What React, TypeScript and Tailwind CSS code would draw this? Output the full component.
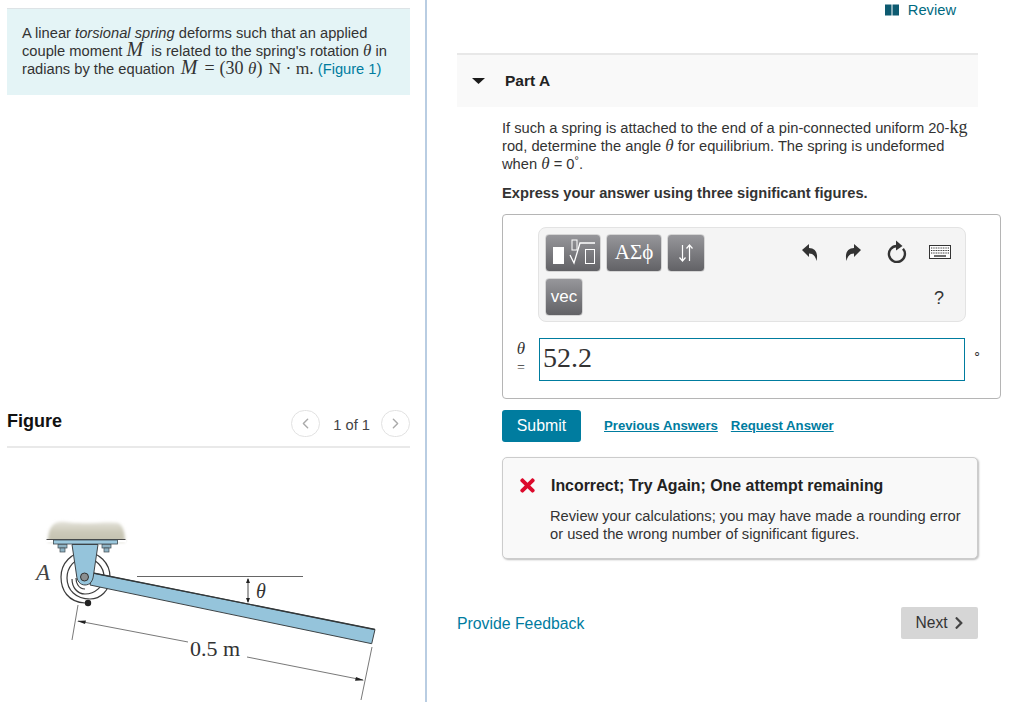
import { FaChevronRight, FaTimes } from "react-icons/fa";
import { ChevronLeft, ChevronRight } from "lucide-react";

const serif = "font-['Liberation_Serif',serif]";

function Theta() {
  return <span className={`${serif} italic text-[17px] leading-[0]`}>θ</span>;
}

function RodFigure() {
  return (
    <svg viewBox="0 0 400 200" className="block w-[400px] h-[200px] ml-[-7px]">
      <defs>
        <linearGradient id="ceil" x1="0" y1="0" x2="0" y2="1">
          <stop offset="0" stopColor="#e4e3da" />
          <stop offset="0.5" stopColor="#cbc9b9" />
          <stop offset="1" stopColor="#c2c0ae" />
        </linearGradient>
        <filter id="soft" x="-10%" y="-30%" width="120%" height="160%">
          <feGaussianBlur stdDeviation="1.800" />
        </filter>
      </defs>
      {/* ceiling */}
      <path d="M48 40 C48 24 54 18 66 20 C84 23 108 19 118 21 C124 24 125 32 125 40 Z" fill="url(#ceil)" filter="url(#soft)" />
      <rect x="46" y="37.500" width="80" height="3" fill="#fff" />
      <path d="M46.500 37.500 H125.500" stroke="#4a4a4a" strokeWidth="1.200" />
      {/* spring */}
      <g fill="none" stroke="#3b3b3b" strokeWidth="1.200">
        <path d="M85 101 C68 100 61 88 61 75 C61 61 72 50 85 50 C99 50 110 61 110 75 C110 89 100 97 90 97 C76 97 67 88 67 76 C67 65 75 56 85 56 C96 56 104 65 104 75 C104 84 95 92 85 92 C77 92 72 85 72 77" />
        <path d="M85 87 C78 87 76 80 76 76" />
      </g>
      <circle cx="88" cy="101" r="3.200" fill="#222" />
      {/* plate and bolts */}
      <rect x="53.500" y="38" width="64" height="4" fill="#9cc9de" stroke="#3f4a50" strokeWidth="0.800" />
      <g fill="#8fb3c4" stroke="#3f4a50" strokeWidth="0.700">
        <rect x="58" y="42.500" width="9" height="3.500" />
        <rect x="102" y="42.500" width="9" height="3.500" />
        <rect x="60" y="46" width="5" height="4" />
        <rect x="104" y="46" width="5" height="4" />
      </g>
      {/* rod */}
      <path d="M93 71 L375 127.500 L371.700 141.700 L90 83 Z" fill="#95c4db" stroke="#3d4346" strokeWidth="1" />
      <path d="M93 71 L375 127.500" stroke="#33383a" strokeWidth="1.400" fill="none" />
      {/* bracket */}
      <path d="M72 42.500 H98 L93.500 73 C93 79 90 83 85 83 C80 83 77 79 76.500 73 Z" fill="#95c4db" stroke="#3d4346" strokeWidth="1" />
      <circle cx="84.500" cy="75" r="4" fill="#8b8f90" stroke="#333" strokeWidth="1" />
      {/* angle */}
      <path d="M137 74.500 H303" stroke="#555" strokeWidth="0.900" />
      <path d="M248 77 V100" stroke="#333" strokeWidth="0.900" />
      <path d="M248 76 L246 81 H250 Z M248 101 L246 96 H250 Z" fill="#222" />
      <text x="256" y="96" fontSize="20" fontStyle="italic" fill="#333" fontFamily="'Liberation Serif', serif">θ</text>
      <text x="36" y="78" fontSize="23" fontStyle="italic" fill="#444" fontFamily="'Liberation Serif', serif">A</text>
      {/* dimension */}
      <g stroke="#555" strokeWidth="0.800" fill="none">
        <path d="M78 103 L72 138" />
        <path d="M372 145 L361 198" />
        <path d="M78 119 L188 140" />
        <path d="M247 155 L363 178" />
      </g>
      <path d="M77 119 L86 118.600 L85 122 Z M364 178.200 L355 178.800 L356 175 Z" fill="#222" />
      <text x="190" y="153.500" fontSize="22" fill="#333" fontFamily="'Liberation Serif', serif">0.5 m</text>
    </svg>
  );
}

function Keyboard() {
  return (
    <svg viewBox="0 0 22 14" className="w-[22px] h-[14px] shrink-0">
      <rect x="0.500" y="0.500" width="21" height="13" fill="#fff" stroke="#333" />
      <path d="M2 3 H20 M2 5.500 H20 M2 8 H20" stroke="#333" strokeWidth="1.200" strokeDasharray="1 0.700" />
      <path d="M5 11 H17" stroke="#333" strokeWidth="1.400" />
    </svg>
  );
}

function UndoIcon({ flip }: { flip?: boolean }) {
  return (
    <svg viewBox="0 0 16 17" className={`w-[16px] h-[17px] shrink-0 ${flip ? "-scale-x-100" : ""}`} fill="#333">
      <path d="M0 6 L7 0 V4 C13 4 16.500 8.500 14.500 17 C13.500 12 11 9.500 7 9.500 V13 Z" />
    </svg>
  );
}

function ResetIcon() {
  return (
    <svg viewBox="0 0 20 23" className="w-[20px] h-[23px] shrink-0" fill="none">
      <path d="M10 6 A8 8 0 1 0 16 8.800" stroke="#333" strokeWidth="2.400" />
      <path d="M9 0.500 L15.500 6 L9 10.500 Z" fill="#333" />
    </svg>
  );
}

function ToolButton({ w, children }: { w: string; children: React.ReactNode }) {
  return (
    <div className={`${w} h-[38px] rounded-[4px] bg-linear-to-b from-[#97979b] to-[#626266] border border-[#d5d5d5] text-white flex items-center justify-center`}>
      {children}
    </div>
  );
}

export default function App() {
  return (
    <div className="flex h-[702px] w-[1024px] overflow-hidden bg-white text-[#333] font-['Liberation_Sans',Arial,sans-serif] text-[14.700px] leading-[18px]">
      <div className="w-[427px] shrink-0 border-r-2 border-[#b9cde2] pt-2 pl-[7px] pr-[15px]">
        <div className="h-[87px] bg-[#e4f4f6] border-t border-[#dde3e6] pl-[15px] pt-[15px] pr-2">
          A linear <i>torsional spring</i> deforms such that an applied couple moment{" "}
          <span className={`${serif} italic text-[20px] leading-[0] mr-[4px]`}>M</span> is related to the spring's rotation <Theta /> in
          radians by the equation <span className={`${serif} italic text-[20px] leading-[0] ml-[2px]`}>M</span>
          <span className={`${serif} text-[18px] leading-[0] ml-[7px]`}>=</span>
          <span className={`${serif} text-[18px] leading-[0] ml-[5px]`}>(30 <i className="text-[17px]">θ</i>)</span>
          <span className={`${serif} text-[17.500px] leading-[0] ml-[6px]`}>N · m.</span>{" "}
          <span className="text-[#007c9f]">(Figure 1)</span>
        </div>
        <div className="mt-[311px] h-[42px] flex items-start border-b-2 border-[#e9e9e9]">
          <span className="font-bold text-[#111] text-[18px] leading-[30px]">Figure</span>
          <div className="ml-auto flex items-center text-[#444] h-[28px] pt-[6px]">
            <span className="w-[29px] h-[27px] rounded-full border border-[#e2e2e2] flex items-center justify-center text-[#aaa]"><ChevronLeft size={17} strokeWidth={2} /></span>
            <span className="ml-[13px] mr-[11px] mt-[4px]">1 of 1</span>
            <span className="w-[29px] h-[27px] rounded-full border border-[#e2e2e2] flex items-center justify-center text-[#aaa]"><ChevronRight size={17} strokeWidth={2} /></span>
          </div>
        </div>
        <div className="mt-[54px]">
          <RodFigure />
        </div>
      </div>

      <div className="flex-1 pl-[30px]">
        <div className="w-[521px] h-[53px] flex justify-end items-start pt-[1px] pr-[22px] text-[#00697f]">
          <span className="flex items-center gap-[9px] leading-[18px]">
            <svg viewBox="0 0 14 12" className="w-[14px] h-[12px]" fill="#0d5a70">
              <rect x="0" y="0.500" width="6.500" height="11" />
              <rect x="7.500" y="0.500" width="6.500" height="11" />
            </svg>
            Review
          </span>
        </div>
        <div className="w-[521px] h-[54px] bg-[#f9f9f9] border-t-2 border-[#e8e8e8] flex items-center pb-[1px]">
          <svg viewBox="0 0 13 6" className="w-[13px] h-[6px] ml-[15px]"><path d="M0 0 H13 L6.500 6 Z" fill="#1c1c1c" /></svg>
          <span className="ml-[20px] font-bold text-[#222] text-[15.500px]">Part A</span>
        </div>

        <div className="pl-[45px]">
          <p className="w-[476px] mt-[12px]">
            If such a spring is attached to the end of a pin-connected uniform 20-<span className={`${serif} text-[18px] leading-[0]`}>kg</span> rod, determine the angle <Theta /> for equilibrium. The spring is undeformed when <Theta /> = 0<sup className="text-[11px] leading-[0]">°</sup>.
          </p>
          <p className="mt-[11px] font-bold">Express your answer using three significant figures.</p>

          <div className="mt-[12px] w-[499px] h-[185px] border border-[#b5b5b5] rounded-[4px] pt-3">
            <div className="ml-[35px] w-[428px] h-[95px] bg-[#f4f4f4] border border-[#e3e3e3] rounded-[8px] pl-[6px] pt-[6px] pr-[14px] flex justify-between">
              <div className="flex flex-col gap-[6px]">
                <div className="flex gap-[5px]">
                  <ToolButton w="w-[56px]">
                    <svg viewBox="0 0 50 32" className="w-[50px] h-[32px]" fill="none" stroke="#fff">
                      <rect x="5" y="10" width="11" height="17" fill="#fff" stroke="none" />
                      <rect x="24" y="3" width="5" height="10" strokeWidth="1" />
                      <path d="M22 18 L26 26 L32 6 H47" strokeWidth="1.300" />
                      <rect x="37.500" y="12.500" width="9" height="14" strokeWidth="1" />
                    </svg>
                  </ToolButton>
                  <ToolButton w="w-[56px]"><span className={`${serif} text-[21px] pb-[3px]`}>ΑΣϕ</span></ToolButton>
                  <ToolButton w="w-[38px]">
                    <svg viewBox="0 0 18 20" className="w-[18px] h-[20px]" fill="none" stroke="#fff" strokeWidth="1.200">
                      <path d="M5.500 2 V18 M2.500 14.500 L5.500 18 L8.500 14.500" />
                      <path d="M12.500 18 V2 M9.500 5.500 L12.500 2 L15.500 5.500" />
                    </svg>
                  </ToolButton>
                </div>
                <ToolButton w="w-[38px]"><span className="text-[17px] pb-[1px]">vec</span></ToolButton>
              </div>
              <div className="flex flex-col w-[149px] pt-[6px]">
                <div className="flex items-center text-[#333] h-[24px]">
                  <UndoIcon />
                  <span className="ml-[27px]"><UndoIcon flip /></span>
                  <span className="ml-[26px] -mt-[2px]"><ResetIcon /></span>
                  <span className="ml-[22px]"><Keyboard /></span>
                </div>
                <div className="mt-[25px] text-right pr-[7px] text-[18px] text-[#333]">?</div>
              </div>
            </div>
            <div className="mt-[16px] flex items-start">
              <div className={`w-[36px] shrink-0 text-center ${serif} pt-[2px]`}>
                <i className="block text-[17px] leading-[18px]">θ</i>
                <span className="block text-[14px] leading-[20px]">=</span>
              </div>
              <div className="w-[426px] h-[43px] border border-[#007c9f] flex items-center pl-[3px]">
                <span className={`${serif} text-[28px] pb-[3px]`}>52.2</span>
              </div>
              <span className="ml-[8px] mt-[6px] text-[13px]">∘</span>
            </div>
          </div>

          <div className="mt-[11px] flex items-center h-[32px]">
            <button className="w-[79px] h-[32px] rounded-[3px] bg-[#007c9f] text-white text-[15.900px]">Submit</button>
            <a className="ml-[23px] font-bold underline text-[#007c9f] text-[13.200px]">Previous Answers</a>
            <a className="ml-[13px] font-bold underline text-[#007c9f] text-[13.200px]">Request Answer</a>
          </div>

          <div className="mt-[15px] w-[476px] h-[102px] bg-[#f9f9f9] border border-[#ccc] rounded-[5px] shadow-[1px_1px_2px_#bbb] pl-[14px] pt-[17px]">
            <div className="flex items-center">
              <FaTimes size={21} className="text-[#dc0a2c]" />
              <span className="ml-[13px] font-bold text-[15.900px] text-[#222]">Incorrect; Try Again; One attempt remaining</span>
            </div>
            <p className="ml-[33px] mt-[11px] w-[425px]">Review your calculations; you may have made a rounding error or used the wrong number of significant figures.</p>
          </div>
        </div>

        <div className="mt-[48px] w-[521px] flex items-center justify-between">
          <a className="text-[#007c9f] text-[15.800px] pt-[1px]">Provide Feedback</a>
          <button className="w-[77px] h-[32px] bg-[#d6d6d6] rounded-[2px] flex items-center justify-center gap-[4px] pl-[2px] text-[#333] text-[15.600px]">
            Next <FaChevronRight size={14} className="text-[#444]" />
          </button>
        </div>
      </div>
    </div>
  );
}
